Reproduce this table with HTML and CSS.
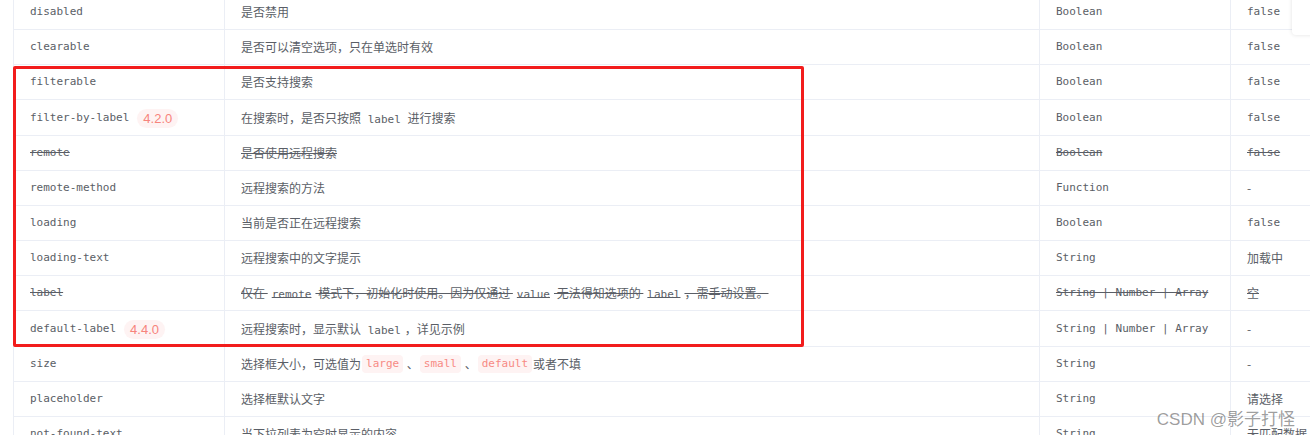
FILE: index.html
```html
<!DOCTYPE html>
<html lang="zh-CN">
<head>
    <meta charset="UTF-8">
    <meta name="viewport" content="width=device-width, initial-scale=1.0">
    <title>Select Attributes</title>
    <link rel="stylesheet" href="styles.css">
</head>
<body>

    <div class="table-wrap">
        <table class="api-table">
            <colgroup>
                <col class="col-name">
                <col class="col-desc">
                <col class="col-type">
                <col class="col-default">
            </colgroup>
            <tbody>
                <tr>
                    <td class="mono">disabled</td>
                    <td>是否禁用</td>
                    <td class="mono">Boolean</td>
                    <td class="mono">false</td>
                </tr>
                <tr>
                    <td class="mono">clearable</td>
                    <td>是否可以清空选项，只在单选时有效</td>
                    <td class="mono">Boolean</td>
                    <td class="mono">false</td>
                </tr>
                <tr>
                    <td class="mono">filterable</td>
                    <td>是否支持搜索</td>
                    <td class="mono">Boolean</td>
                    <td class="mono">false</td>
                </tr>
                <tr class="tall">
                    <td><span class="mono">filter-by-label</span><span class="version">4.2.0</span></td>
                    <td>在搜索时，是否只按照 <code>label</code> 进行搜索</td>
                    <td class="mono">Boolean</td>
                    <td class="mono">false</td>
                </tr>
                <tr class="deprecated">
                    <td class="mono">remote</td>
                    <td>是否使用远程搜索</td>
                    <td class="mono">Boolean</td>
                    <td class="mono">false</td>
                </tr>
                <tr>
                    <td class="mono">remote-method</td>
                    <td>远程搜索的方法</td>
                    <td class="mono">Function</td>
                    <td>-</td>
                </tr>
                <tr>
                    <td class="mono">loading</td>
                    <td>当前是否正在远程搜索</td>
                    <td class="mono">Boolean</td>
                    <td class="mono">false</td>
                </tr>
                <tr>
                    <td class="mono">loading-text</td>
                    <td>远程搜索中的文字提示</td>
                    <td class="mono">String</td>
                    <td>加载中</td>
                </tr>
                <tr class="deprecated">
                    <td class="mono">label</td>
                    <td>仅在 <code>remote</code> 模式下，初始化时使用。因为仅通过 <code>value</code> 无法得知选项的 <code>label</code>，需手动设置。</td>
                    <td class="mono">String | Number | Array</td>
                    <td>空</td>
                </tr>
                <tr class="tall">
                    <td><span class="mono">default-label</span><span class="version">4.4.0</span></td>
                    <td>远程搜索时，显示默认 <code>label</code>，详见示例</td>
                    <td class="mono">String | Number | Array</td>
                    <td>-</td>
                </tr>
                <tr>
                    <td class="mono">size</td>
                    <td>选择框大小，可选值为<code class="value">large</code> 、<code class="value">small</code> 、<code class="value">default</code>或者不填</td>
                    <td class="mono">String</td>
                    <td>-</td>
                </tr>
                <tr>
                    <td class="mono">placeholder</td>
                    <td>选择框默认文字</td>
                    <td class="mono">String</td>
                    <td>请选择</td>
                </tr>
                <tr>
                    <td class="mono">not-found-text</td>
                    <td>当下拉列表为空时显示的内容</td>
                    <td class="mono">String</td>
                    <td>无匹配数据</td>
                </tr>
            </tbody>
        </table>
    </div>

    <!-- annotation box drawn over the screenshot -->
    <div class="highlight"></div>

    <div class="side-panel"></div>

    <div class="watermark">CSDN @影子打怪</div>

</body>
</html>
```

FILE: styles.css
```css
html, body {
    margin: 0;
    padding: 0;
    overflow: hidden;
    background: #fff;
}

body {
    font-family: "Noto Sans CJK SC", "Noto Sans", sans-serif;
    font-size: 12px;
    color: #5a5e66;
    position: relative;
    height: 435px;
}

.table-wrap {
    margin: -6px 0 0 13px;
}

.api-table {
    border-collapse: separate;
    border-spacing: 0;
    table-layout: fixed;
    width: 1420px;
    border-left: 1px solid #ebeef5;
    border-top: 1px solid #ebeef5;
}

.col-name { width: 211px; }
.col-desc { width: 815px; }
.col-type { width: 191px; }
.col-default { width: 202px; }

.api-table td {
    box-sizing: border-box;
    height: 35px;
    padding: 0 16px;
    line-height: 18px;
    border-right: 1px solid #ebeef5;
    border-bottom: 1px solid #ebeef5;
    white-space: nowrap;
    vertical-align: middle;
}

.api-table .tall td {
    height: 36px;
}

.mono,
code {
    font-family: "DejaVu Sans Mono", monospace;
    font-size: 11px;
}

.api-table td span,
.api-table td code {
    line-height: 1;
}

code {
    padding: 0 4px;
}

.api-table td code.value {
    display: inline-block;
    line-height: 18px;
    padding: 0 4px;
    margin: 0 1px;
    border-radius: 4px;
    background: #fef3f3;
    color: #f78a84;
    vertical-align: top;
}

.api-table td .version {
    display: inline-block;
    margin-left: 8px;
    padding: 0 6px;
    height: 19px;
    line-height: 19px;
    border-radius: 10px;
    background: #fef3f3;
    color: #f7847c;
    font-family: "Liberation Sans", Arial, sans-serif;
    font-size: 13px;
    vertical-align: middle;
}

.deprecated td {
    text-decoration: line-through;
}

.highlight {
    position: absolute;
    left: 13px;
    top: 66px;
    width: 785px;
    height: 275px;
    border: 3px solid #f21c1c;
    border-radius: 2px;
}

.side-panel {
    position: absolute;
    top: -10px;
    right: -10px;
    width: 28px;
    height: 45px;
    background: #fff;
    border-radius: 4px;
    box-shadow: 0 0 4px rgba(0, 0, 0, 0.12);
}

.watermark {
    position: absolute;
    right: 15px;
    bottom: 5px;
    font-family: "Liberation Sans", "Noto Sans CJK SC", sans-serif;
    font-size: 17px;
    line-height: 20px;
    color: rgba(0, 0, 0, 0.4);
}
```
